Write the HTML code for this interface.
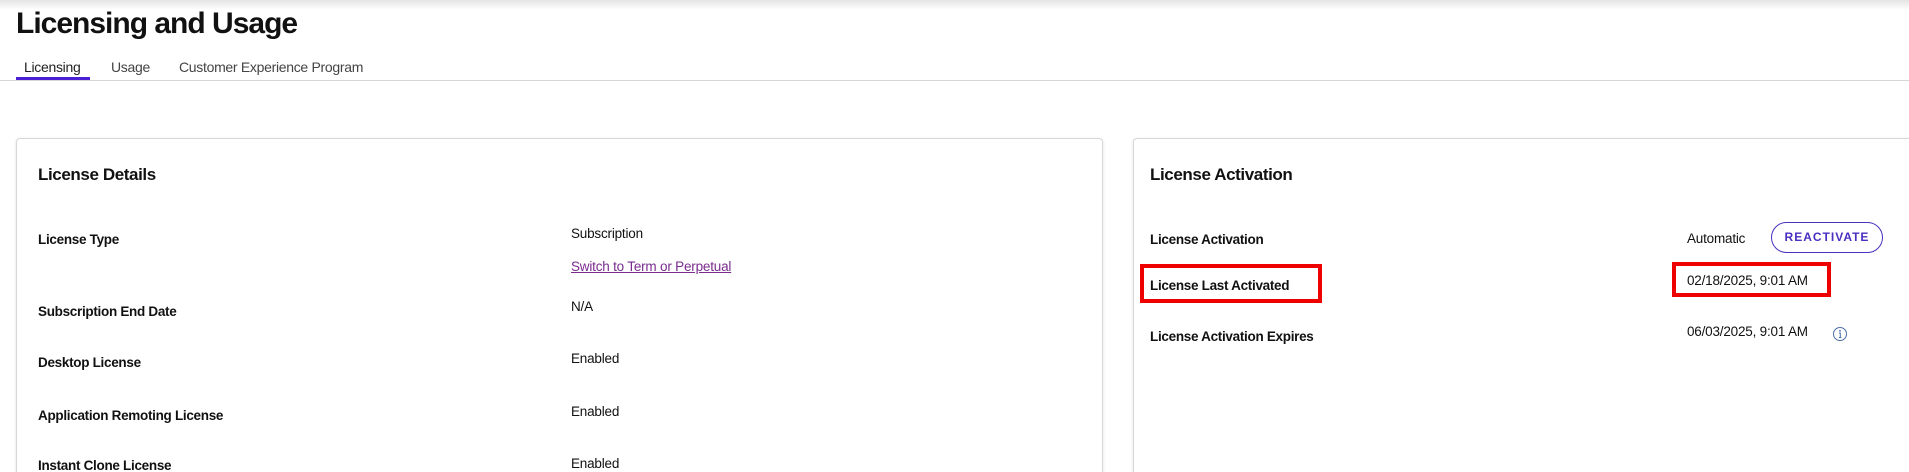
<!DOCTYPE html>
<html style="width:1909px;height:472px;overflow:hidden"><head><style>
body{margin:0;width:1909px;height:472px;overflow:hidden;background:#fff;font-family:"Liberation Sans",sans-serif;color:#111;position:relative}
.a{position:absolute;white-space:nowrap}
.top{position:absolute;left:0;top:0;width:1909px;height:10px;background:linear-gradient(#e4e4e4,#fff)}
.card{position:absolute;border:1px solid #d8d8d8;border-bottom:none;border-radius:4px 4px 0 0;background:#fff;box-shadow:0 1px 3px rgba(0,0,0,.12)}
.lbl{font-size:13.5px;font-weight:bold;letter-spacing:-.3px}
.val{font-size:13.5px;letter-spacing:-.2px}
.h{font-size:17px;font-weight:bold;letter-spacing:-.4px}
.red{position:absolute;border:4px solid #e00;box-sizing:border-box}
</style></head><body>
<div class="top"></div>
<div class="a" style="left:16px;top:7px;font-size:30px;font-weight:bold;letter-spacing:-1px">Licensing and Usage</div>
<div class="a" style="left:24px;top:59px;font-size:14px;color:#222;letter-spacing:-.3px">Licensing</div>
<div class="a" style="left:111px;top:59px;font-size:14px;color:#444;letter-spacing:-.3px">Usage</div>
<div class="a" style="left:179px;top:59px;font-size:14px;color:#444;letter-spacing:-.3px">Customer Experience Program</div>
<div class="a" style="left:0;top:80px;width:1909px;height:1px;background:#d6d6d6"></div>
<div class="a" style="left:16px;top:77px;width:74px;height:3px;background:#4a1fd6"></div>

<div class="card" style="left:16px;top:138px;width:1085px;height:334px"></div>
<div class="card" style="left:1133px;top:138px;width:790px;height:334px;border-right:none"></div>

<div class="a h" style="left:38px;top:165px">License Details</div>
<div class="a lbl" style="left:38px;top:232px">License Type</div>
<div class="a lbl" style="left:38px;top:304px">Subscription End Date</div>
<div class="a lbl" style="left:38px;top:355px">Desktop License</div>
<div class="a lbl" style="left:38px;top:408px">Application Remoting License</div>
<div class="a lbl" style="left:38px;top:458px">Instant Clone License</div>
<div class="a val" style="left:571px;top:226px">Subscription</div>
<div class="a val" style="left:571px;top:259px;color:#7a2b8f;text-decoration:underline">Switch to Term or Perpetual</div>
<div class="a val" style="left:571px;top:299px">N/A</div>
<div class="a val" style="left:571px;top:351px">Enabled</div>
<div class="a val" style="left:571px;top:404px">Enabled</div>
<div class="a val" style="left:571px;top:456px">Enabled</div>

<div class="a h" style="left:1150px;top:165px">License Activation</div>
<div class="a lbl" style="left:1150px;top:232px">License Activation</div>
<div class="a lbl" style="left:1150px;top:278px">License Last Activated</div>
<div class="a lbl" style="left:1150px;top:329px">License Activation Expires</div>
<div class="a val" style="left:1687px;top:231px">Automatic</div>
<div class="a" style="left:1771px;top:222px;width:112px;height:31px;border:1px solid #4a2fc0;border-radius:16px;box-sizing:border-box;color:#4a2fc0;font-size:12px;font-weight:bold;letter-spacing:1px;text-align:center;line-height:29px">REACTIVATE</div>
<div class="a val" style="left:1687px;top:273px">02/18/2025, 9:01 AM</div>
<div class="a val" style="left:1687px;top:324px">06/03/2025, 9:01 AM</div>
<svg class="a" style="left:1832px;top:326px" width="16" height="16" viewBox="0 0 16 16"><circle cx="8" cy="8" r="6.5" fill="none" stroke="#4a6fa5" stroke-width="1"/><circle cx="8" cy="4.8" r=".9" fill="#4a6fa5"/><path d="M7 7h1.3v4.5M6.8 11.5h2.6" stroke="#4a6fa5" fill="none" stroke-width="1"/></svg>
<div class="red" style="left:1140px;top:264px;width:182px;height:39px"></div>
<div class="red" style="left:1672px;top:262px;width:159px;height:35px"></div>
</body></html>
